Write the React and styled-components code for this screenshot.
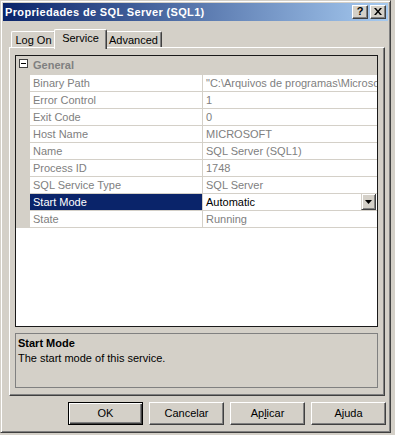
import React from "react";
import styled, { createGlobalStyle } from "styled-components";

const Global = createGlobalStyle`
  html, body { margin: 0; padding: 0; background: #d4d0c8; }
  body { font-family: "Liberation Sans", Arial, sans-serif; font-size: 11px; }
  * { box-sizing: border-box; }
`;

const Window = styled.div`
  width: 391px;
  height: 433px;
  background: #d4d0c8;
  border: 1px solid;
  border-color: #d4d0c8 #404040 #404040 #d4d0c8;
  box-shadow: inset 1px 1px #ffffff, inset -1px -1px #808080;
  padding: 2px;
  display: flex;
  flex-direction: column;
`;

const TitleBar = styled.div`
  height: 18px;
  background: linear-gradient(to right, #0a246a, #a6caf0);
  display: flex;
  align-items: center;
  justify-content: space-between;
  padding: 0 2px 0 2px;
`;

const Title = styled.div`
  color: #fff;
  font-weight: bold;
  font-size: 11px;
  letter-spacing: 0.35px;
`;

const TitleButtons = styled.div`
  display: flex;
  gap: 2px;
`;

const CaptionButton = styled.div`
  width: 16px;
  height: 14px;
  background: #d4d0c8;
  border: 1px solid;
  border-color: #ffffff #404040 #404040 #ffffff;
  box-shadow: inset -1px -1px #808080;
  display: flex;
  align-items: center;
  justify-content: center;
  font-weight: bold;
  font-size: 11px;
  color: #000;
  line-height: 1;
  padding-bottom: 1px;
`;

const Body = styled.div`
  flex: 1;
  display: flex;
  flex-direction: column;
  padding: 8px 2px 0 6px;
`;

const Tabs = styled.div`
  display: flex;
  align-items: flex-end;
  height: 18px;
  padding-left: 2px;
  position: relative;
  z-index: 1;
`;

const Tab = styled.div`
  height: ${(p) => (p.$active ? 20 : 16)}px;
  margin: ${(p) => (p.$active ? "0 -2px -2px -2px" : "0")};
  width: ${(p) => p.$w}px;
  background: #d4d0c8;
  border-top: 1px solid #ffffff;
  border-left: 1px solid #ffffff;
  border-right: 1px solid #404040;
  box-shadow: inset -1px 0 #808080;
  border-radius: 2px 2px 0 0;
  display: flex;
  justify-content: center;
  padding-top: 2px;
  color: #000;
  position: relative;
  z-index: ${(p) => (p.$active ? 2 : 0)};
`;

const Panel = styled.div`
  width: 376px;
  border: 1px solid;
  border-color: #ffffff #404040 #404040 #ffffff;
  box-shadow: inset -1px -1px #808080;
  padding: 7px 6px 7px 5px;
  display: flex;
  flex-direction: column;
  gap: 6px;
`;

const Grid = styled.div`
  height: 272px;
  background: #fff;
  border: 1px solid #1a1a1a;
  display: flex;
  flex-direction: column;
`;

const Row = styled.div`
  display: flex;
  height: ${(p) => (p.$header ? 19 : 17)}px;
`;

const Gutter = styled.div`
  width: 14px;
  background: #d4d0c8;
  display: flex;
  align-items: flex-start;
  padding: 3px 0 0 3px;
`;

const MinusBox = styled.div`
  width: 9px;
  height: 9px;
  border: 1px solid #404040;
  background: #fff;
  display: flex;
  align-items: center;
  justify-content: center;
  &::after {
    content: "";
    width: 5px;
    height: 1px;
    background: #000;
  }
`;

const HeaderCell = styled.div`
  flex: 1;
  background: #d4d0c8;
  border-bottom: 1px solid #d4d0c8;
  color: #808080;
  font-weight: bold;
  padding: 3px 0 0 3px;
`;

const NameCell = styled.div`
  width: 172px;
  border-bottom: 1px solid #d4d0c8;
  background: ${(p) => (p.$selected ? "#0a246a" : "#fff")};
  color: ${(p) => (p.$selected ? "#fff" : "#808080")};
  padding: 2px 0 0 3px;
  white-space: nowrap;
  overflow: hidden;
`;

const ValueCell = styled.div`
  flex: 1;
  min-width: 0;
  border-left: 1px solid #d4d0c8;
  border-bottom: 1px solid #d4d0c8;
  color: ${(p) => (p.$editable ? "#000" : "#808080")};
  padding: 2px 0 0 3px;
  white-space: nowrap;
  overflow: hidden;
  display: flex;
  justify-content: space-between;
  align-items: flex-start;
  position: relative;
`;

const DropButton = styled.div`
  position: absolute;
  right: 1px;
  top: -1px;
  width: 15px;
  height: 17px;
  background: #d4d0c8;
  border: 1px solid;
  border-color: #d4d0c8 #404040 #404040 #d4d0c8;
  box-shadow: inset 1px 1px #ffffff, inset -1px -1px #808080;
  display: flex;
  align-items: center;
  justify-content: center;
`;

const Description = styled.div`
  height: 55px;
  border: 1px solid #808080;
  padding: 3px 0 0 2px;
  color: #000;
  display: flex;
  flex-direction: column;
  gap: 3px;
`;

const DescTitle = styled.div`
  font-weight: bold;
  font-size: 11px;
`;

const ButtonRow = styled.div`
  display: flex;
  justify-content: flex-end;
  gap: 6px;
  margin-top: 6px;
`;

const Button = styled.div`
  width: 75px;
  height: 23px;
  background: #d4d0c8;
  border: 1px solid;
  border-color: ${(p) => (p.$default ? "#000" : "#ffffff #404040 #404040 #ffffff")};
  box-shadow: ${(p) =>
    p.$default
      ? "inset 1px 1px #ffffff, inset -1px -1px #404040, inset -2px -2px #808080"
      : "inset -1px -1px #808080"};
  display: flex;
  align-items: center;
  justify-content: center;
  color: #000;
  font-size: 11px;
  padding-bottom: 1px;
  u { text-decoration: underline; }
`;

const rows = [
  ["Binary Path", "\"C:\\Arquivos de programas\\Microsoft SQL Server\\MSSQL.1\\MSSQL\\Binn\\sqlservr.exe\""],
  ["Error Control", "1"],
  ["Exit Code", "0"],
  ["Host Name", "MICROSOFT"],
  ["Name", "SQL Server (SQL1)"],
  ["Process ID", "1748"],
  ["SQL Service Type", "SQL Server"],
  ["Start Mode", "Automatic", true],
  ["State", "Running"],
];

export default function App() {
  return (
    <>
      <Global />
      <Window>
        <TitleBar>
          <Title>Propriedades de SQL Server (SQL1)</Title>
          <TitleButtons>
            <CaptionButton>?</CaptionButton>
            <CaptionButton>
              <svg width="8" height="7" viewBox="0 0 8 7">
                <path d="M0 0h2l2 2.5L6 0h2L5 3.5 8 7H6L4 4.5 2 7H0l3-3.5z" fill="#000" />
              </svg>
            </CaptionButton>
          </TitleButtons>
        </TitleBar>
        <Body>
          <Tabs>
            <Tab $w={45}>Log On</Tab>
            <Tab $w={53} $active>Service</Tab>
            <Tab $w={57}>Advanced</Tab>
          </Tabs>
          <Panel>
            <Grid>
              <Row $header>
                <Gutter>
                  <MinusBox />
                </Gutter>
                <HeaderCell>General</HeaderCell>
              </Row>
              {rows.map(([name, value, sel]) => (
                <Row key={name}>
                  <Gutter />
                  <NameCell $selected={sel}>{name}</NameCell>
                  <ValueCell $editable={sel}>
                    <span>{value}</span>
                    {sel && (
                      <DropButton>
                        <svg width="7" height="4" viewBox="0 0 7 4">
                          <path d="M0 0h7L3.5 4z" fill="#000" />
                        </svg>
                      </DropButton>
                    )}
                  </ValueCell>
                </Row>
              ))}
            </Grid>
            <Description>
              <DescTitle>Start Mode</DescTitle>
              <div>The start mode of this service.</div>
            </Description>
          </Panel>
          <ButtonRow>
            <Button $default>OK</Button>
            <Button>Cancelar</Button>
            <Button>
              <span>
                Ap<u>l</u>icar
              </span>
            </Button>
            <Button>Ajuda</Button>
          </ButtonRow>
        </Body>
      </Window>
    </>
  );
}
